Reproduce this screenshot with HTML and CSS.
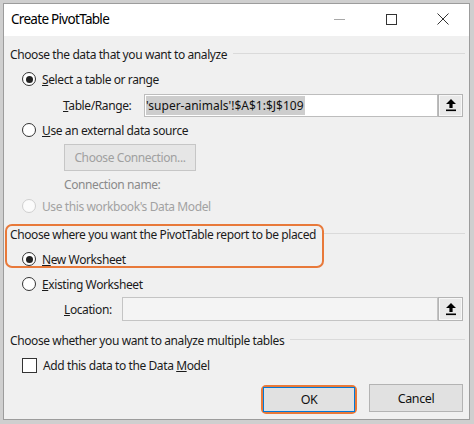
FILE: index.html
```html
<!DOCTYPE html>
<html>
<head>
<meta charset="utf-8">
<link rel="stylesheet" href="styles.css">
</head>
<body>
<div class="dialog">
  <div class="titlebar">
    <div class="title">Create PivotTable</div>
    <div class="controls">
      <span class="ctl"><svg width="11" height="11" viewBox="0 0 11 11"><line x1="0" y1="5.5" x2="11" y2="5.5" stroke="#a8a8a8" stroke-width="1"/></svg></span>
      <span class="ctl"><svg width="11" height="11" viewBox="0 0 11 11"><rect x="0.5" y="0.5" width="10" height="10" fill="none" stroke="#333" stroke-width="1"/></svg></span>
      <span class="ctl"><svg width="12" height="12" viewBox="0 0 12 12"><path d="M0.5 0.5 L11.5 11.5 M11.5 0.5 L0.5 11.5" stroke="#333" stroke-width="1" fill="none"/></svg></span>
    </div>
  </div>
  <div class="content">
    <div class="heading"><span>Choose the data that you want to analyze</span><i class="rule"></i></div>
    <div class="opt"><span class="radio on"></span><span><u>S</u>elect a table or range</span></div>
    <div class="field-row">
      <span class="lbl lbl-range"><u>T</u>able/Range:</span>
      <div class="input"><span class="sel">'super-animals'!$A$1:$J$109</span></div>
      <span class="pick"><svg width="10" height="13" viewBox="0 0 10 13"><polygon points="5,0 10,5 6.6,5 6.6,9 3.4,9 3.4,5 0,5" fill="#000"/><rect x="0" y="10.5" width="10" height="1.6" fill="#000"/></svg></span>
    </div>
    <div class="opt opt-sm"><span class="radio"></span><span><u>U</u>se an external data source</span></div>
    <div class="btn-row"><span class="btn-disabled">Choose Connection...</span></div>
    <div class="conn">Connection name:</div>
    <div class="opt opt-xs disabled"><span class="radio dis"></span><span>Use this workbook's Data Model</span></div>
    <div class="highlight">
      <div class="heading"><span>Choose where you want the PivotTable report to be placed</span><i class="rule"></i></div>
      <div class="opt"><span class="radio on"></span><span><u>N</u>ew Worksheet</span></div>
    </div>
    <div class="opt opt-sm"><span class="radio"></span><span><u>E</u>xisting Worksheet</span></div>
    <div class="field-row">
      <span class="lbl lbl-loc"><u>L</u>ocation:</span>
      <div class="input input-dis"></div>
      <span class="pick pick-loc"><svg width="10" height="13" viewBox="0 0 10 13"><polygon points="5,0 10,5 6.6,5 6.6,9 3.4,9 3.4,5 0,5" fill="#000"/><rect x="0" y="10.5" width="10" height="1.6" fill="#000"/></svg></span>
    </div>
    <div class="heading heading3"><span>Choose whether you want to analyze multiple tables</span><i class="rule"></i></div>
    <div class="opt"><span class="check"></span><span>Add this data to the Data <u>M</u>odel</span></div>
    <div class="actions">
      <span class="ok-ring"><span class="btn btn-ok">OK</span></span>
      <span class="btn btn-cancel">Cancel</span>
    </div>
  </div>
</div>
</body>
</html>
```
FILE: styles.css
```css
html, body {
  margin: 0;
  padding: 0;
}
body {
  width: 474px;
  height: 424px;
  background: #cfcfcf;
  padding: 3px 0 0 3px;
  box-sizing: border-box;
  font-family: "Noto Sans", "Open Sans", sans-serif;
  font-size: 12px;
  letter-spacing: -0.4px;
  color: #1b1b1b;
  overflow: hidden;
}
.dialog {
  width: 467px;
  height: 417px;
  border: 1px solid #9c9c9c;
  box-sizing: border-box;
  background: #f0f0f0;
}
.titlebar {
  height: 32px;
  background: #fff;
  display: flex;
  align-items: center;
  justify-content: space-between;
}
.title {
  padding-left: 7px;
  font-size: 13.5px;
  letter-spacing: -0.7px;
  color: #000;
  padding-bottom: 2px;
}
.controls {
  display: flex;
  height: 32px;
}
.ctl {
  width: 52px;
  display: flex;
  align-items: center;
  justify-content: center;
  padding-bottom: 2px;
}
.content {
  padding: 6px 4px 0 6px;
}
.heading {
  height: 24px;
  display: flex;
  align-items: center;
  white-space: nowrap;
}
.heading .rule {
  flex: 1;
  height: 1px;
  background: #dadada;
  margin-left: 6px;
  margin-top: -2px;
}
.heading3 {
  margin-top: 6px;
}
.opt {
  height: 26px;
  display: flex;
  align-items: center;
  padding-left: 12px;
  gap: 6px;
  white-space: nowrap;
}
.opt-sm {
  height: 24px;
}
.opt-xs {
  height: 22px;
}
.disabled {
  color: #a2a2a2;
}
.radio {
  width: 14px;
  height: 14px;
  border: 1px solid #333;
  border-radius: 50%;
  background: #fff;
  box-sizing: border-box;
  display: flex;
  align-items: center;
  justify-content: center;
  flex: none;
}
.radio.on::after {
  content: "";
  width: 7px;
  height: 7px;
  border-radius: 50%;
  background: #222;
}
.radio.dis {
  border-color: #cfcfcf;
  background: #fbfbfb;
}
.check {
  width: 15px;
  height: 15px;
  border: 1px solid #333;
  background: #fff;
  box-sizing: border-box;
  flex: none;
}
.field-row {
  height: 26px;
  display: flex;
  align-items: center;
  padding-left: 53px;
  white-space: nowrap;
}
.lbl-range {
  width: 81px;
}
.lbl-loc {
  width: 59px;
  padding-left: 1px;
  box-sizing: border-box;
}
.input {
  width: 294px;
  height: 23px;
  border: 1px solid #bdbdbd;
  background: #fff;
  box-sizing: border-box;
  display: flex;
  align-items: center;
  padding-left: 1px;
}
.input-dis {
  width: 316px;
  height: 24px;
  background: #f4f4f4;
  border-color: #c4c4c4;
}
.sel {
  background: #cdcdcd;
  color: #111;
  line-height: 19px;
  padding-right: 1px;
  letter-spacing: 0;
}
.pick {
  width: 25px;
  height: 23px;
  box-sizing: border-box;
  border: 1px solid #b4b4b4;
  background: #e9e9e9;
  box-shadow: inset 0 0 0 1px #f7f7f7;
  display: flex;
  align-items: center;
  justify-content: center;
}
.pick-loc {
  height: 24px;
}
.btn-row {
  height: 31px;
  display: flex;
  align-items: center;
  padding-left: 54px;
}
.btn-disabled {
  width: 132px;
  height: 27px;
  box-sizing: border-box;
  border: 1px solid #c6c6c6;
  background: #e6e6e6;
  color: #a0a0a0;
  display: flex;
  align-items: center;
  justify-content: center;
}
.conn {
  height: 22px;
  display: flex;
  align-items: center;
  padding-left: 54px;
  color: #8a8a8a;
}
.highlight {
  position: relative;
  margin-top: 5px;
}
.highlight::after {
  content: "";
  position: absolute;
  left: -5px;
  top: 2px;
  width: 319px;
  height: 44px;
  border: 2px solid #e8793a;
  border-radius: 7px;
  box-sizing: border-box;
}
.actions {
  margin-top: 6px;
  display: flex;
  justify-content: flex-end;
  align-items: flex-start;
  gap: 12px;
  padding-right: 2px;
}
.ok-ring {
  width: 96px;
  height: 29px;
  margin-top: 1px;
  border: 2px solid #e8793a;
  border-radius: 5px;
  box-sizing: border-box;
  display: flex;
}
.btn {
  display: flex;
  align-items: center;
  justify-content: center;
  box-sizing: border-box;
  background: #e1e1e1;
  color: #111;
  font-size: 12.5px;
}
.btn-ok {
  width: 100%;
  height: 100%;
  border: 1px solid #0078d7;
}
.btn-cancel {
  width: 94px;
  height: 28px;
  border: 1px solid #b3b3b3;
}
```
